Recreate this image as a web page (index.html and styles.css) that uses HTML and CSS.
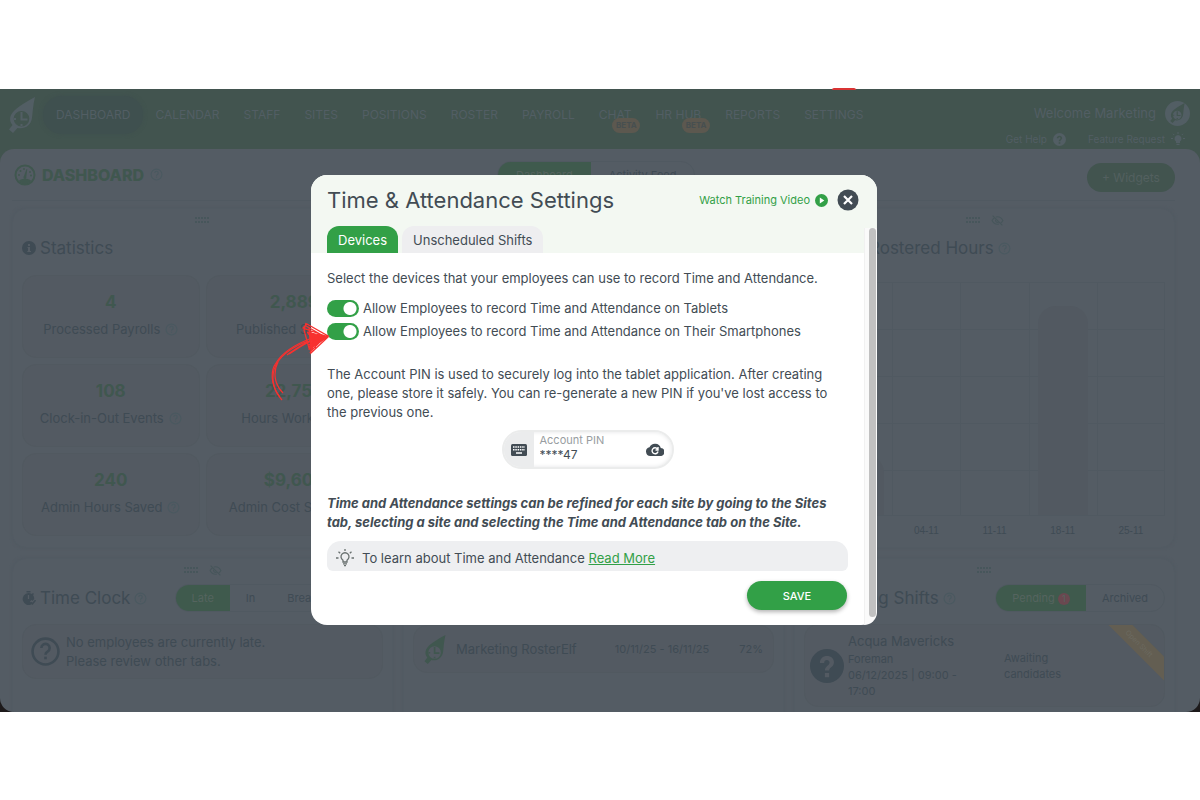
FILE: index.html
```html
<!DOCTYPE html>
<html lang="en">
<head>
  <meta charset="UTF-8" />
  <meta name="viewport" content="width=device-width, initial-scale=1.0" />
  <title>Time &amp; Attendance Settings</title>
  <link rel="stylesheet" href="styles.css">
</head>
<body>
  <!-- shared icons -->
  <svg class="sprite" aria-hidden="true">
    <symbol id="help" viewBox="0 0 24 24"><circle cx="12" cy="12" r="10" fill="none" stroke="currentColor" stroke-width="2"/><path d="M8.800 9.300a3.200 3.200 0 1 1 4.800 2.800c-1 .6-1.600 1.100-1.600 2.400" fill="none" stroke="currentColor" stroke-width="2"/><rect x="11" y="16" width="2" height="2" fill="currentColor"/></symbol>
    <symbol id="help-solid" viewBox="0 0 24 24"><path fill="currentColor" fill-rule="evenodd" d="M12 0a12 12 0 1 0 0 24 12 12 0 0 0 0-24zm-1.500 17h3v3h-3zm0-1.800c0-3.200 3.300-3.400 3.300-5.700 0-1-.8-1.700-1.900-1.700-1.200 0-1.900.8-1.900 2H7c0-3 2-4.900 5-4.900s4.900 1.800 4.900 4.400c0 3.400-3.400 3.600-3.400 5.900z"/></symbol>
    <symbol id="grip" viewBox="0 0 16 6"><g fill="currentColor"><rect width="2" height="2"/><rect x="3" width="2" height="2"/><rect x="6" width="2" height="2"/><rect x="9" width="2" height="2"/><rect x="12" width="2" height="2"/><rect y="4" width="2" height="2"/><rect x="3" y="4" width="2" height="2"/><rect x="6" y="4" width="2" height="2"/><rect x="9" y="4" width="2" height="2"/><rect x="12" y="4" width="2" height="2"/></g></symbol>
    <symbol id="eye-off" viewBox="0 0 24 24"><path fill="none" stroke="currentColor" stroke-width="2" d="M9 5.500c6-1.500 10.500 2 13 6.500-1 2-2.300 3.600-4 4.800M14.500 18.500C9 19.800 4.500 17 2 12c1-2 2.300-3.600 4-4.700M3 3l18 18M9.500 9.500a3.500 3.500 0 0 0 5 5"/></symbol>
    <symbol id="leaf" viewBox="0 0 26 36"><path fill="currentColor" fill-rule="evenodd" d="M26 0C15 6 5 12 2 18c-1.800 4.500-.6 7.500 1.500 10L0 32.500 4 36l4.500-5C16 32.500 22 28 23 21c.8-6 1-13 3-21zM12.500 14a7.800 7.800 0 1 0 0 15.600 7.800 7.800 0 0 0 0-15.600z"/><path d="M12.500 15v7.500h6M5 22h2M12.500 27v2" stroke="currentColor" stroke-width="2" fill="none"/></symbol>
  </svg>

  <div class="app">
    <header class="topbar">
      <svg class="logo"><use href="#leaf"/></svg>
      <nav class="nav">
        <a href="#" class="active">DASHBOARD</a>
        <a href="#">CALENDAR</a>
        <a href="#">STAFF</a>
        <a href="#">SITES</a>
        <a href="#">POSITIONS</a>
        <a href="#">ROSTER</a>
        <a href="#">PAYROLL</a>
        <a href="#">CHAT<span class="beta">BETA</span></a>
        <a href="#">HR HUB<span class="beta">BETA</span></a>
        <a href="#">REPORTS</a>
        <a href="#" class="marked">SETTINGS</a>
      </nav>
      <div class="account">
        <div class="welcome">Welcome Marketing
          <span class="avatar"><svg><use href="#leaf"/></svg></span>
        </div>
        <div class="links">
          <a href="#">Get Help <svg width="13" height="13"><use href="#help-solid"/></svg></a>
          <a href="#">Feature Request
            <svg width="14" height="14" viewBox="0 0 14 14"><path fill="currentColor" d="M7 3a3.600 3.600 0 0 0-2 6.500V11h4V9.500A3.600 3.600 0 0 0 7 3zM5.500 11.800h3V13h-3z"/><path stroke="currentColor" d="M7 0v2M0 6.500h2M12 6.500h2M2 1.800l1.200 1.200M12 1.800l-1.200 1.200"/></svg></a>
        </div>
      </div>
    </header>

    <main class="panel">
      <div class="page-head">
        <h1>
          <svg width="22" height="22" viewBox="0 0 22 22"><circle cx="11" cy="11" r="9.500" fill="none" stroke="currentColor" stroke-width="2"/><path fill="currentColor" d="M5 16.500c3-2.500 9-2.500 12 0-3 4.500-9 4.500-12 0zM10 12l2.500-7 .8.3-1 7.200a1.500 1.500 0 1 1-2.300-.5z"/><g fill="currentColor"><circle cx="5" cy="11" r="1"/><circle cx="6.500" cy="7" r="1"/><circle cx="10" cy="5" r="1"/><circle cx="16" cy="8" r="1"/><circle cx="17" cy="11.500" r="1"/></g></svg>
          DASHBOARD <svg class="q"><use href="#help"/></svg>
        </h1>
        <div class="tabs page-tabs"><button class="on">Dashboard</button><button>Activity Feed</button></div>
        <button class="add">+ Widgets</button>
      </div>

      <div class="widgets">
        <section class="widget">
          <div class="grip"><svg class="dots"><use href="#grip"/></svg></div>
          <h2><svg width="14" height="14" viewBox="0 0 14 14"><path fill="currentColor" fill-rule="evenodd" d="M7 0a7 7 0 1 0 0 14A7 7 0 0 0 7 0zM6 3h2v2H6zM5.500 6H8v4h1v1H5.300v-1H6V7h-.5z"/></svg>Statistics</h2>
          <div class="stats">
            <div class="stat"><b>4</b><span>Processed Payrolls <svg class="q"><use href="#help"/></svg></span></div>
            <div class="stat"><b>2,889</b><span>Published Shifts <svg class="q"><use href="#help"/></svg></span></div>
            <div class="stat"><b>108</b><span>Clock-in-Out Events <svg class="q"><use href="#help"/></svg></span></div>
            <div class="stat"><b>22,754</b><span>Hours Worked <svg class="q"><use href="#help"/></svg></span></div>
            <div class="stat"><b>240</b><span>Admin Hours Saved <svg class="q"><use href="#help"/></svg></span></div>
            <div class="stat"><b>$9,600</b><span>Admin Cost Saved <svg class="q"><use href="#help"/></svg></span></div>
          </div>
        </section>

        <section class="widget"></section>

        <section class="widget">
          <div class="grip"><svg class="dots"><use href="#grip"/></svg><svg class="eye"><use href="#eye-off"/></svg></div>
          <h2 class="hours">Rostered Hours<svg class="q"><use href="#help"/></svg></h2>
          <div class="chart">
            <div class="col"><div class="plot"><i style="height:26%"></i></div><span></span></div>
            <div class="col"><div class="plot"></div><span>04-11</span></div>
            <div class="col"><div class="plot"></div><span>11-11</span></div>
            <div class="col"><div class="plot"><i style="height:90%"></i></div><span>18-11</span></div>
            <div class="col"><div class="plot"></div><span>25-11</span></div>
          </div>
        </section>

        <section class="widget">
          <div class="grip"><svg class="dots"><use href="#grip"/></svg><svg class="eye"><use href="#eye-off"/></svg></div>
          <div class="widget-head">
            <h2><svg width="14" height="14" viewBox="0 0 14 14"><path fill="currentColor" d="M4.500 0h4v1.500h-4zM6.500 2a6 6 0 1 0 3.500 11L8 10.500 9.500 9l1 1 1.700-2A6 6 0 0 0 11 4l1-1-1-1-1.200 1A6 6 0 0 0 6.500 2z"/><path d="M6.500 4v4" stroke="#545c64" stroke-width="1.300"/><path d="M9 11.200l1.500 1.600 3-3.600" fill="none" stroke="currentColor" stroke-width="1.500"/></svg>Time Clock<svg class="q"><use href="#help"/></svg></h2>
            <div class="tabs clock-tabs"><button class="on">Late</button><button>In</button><button>Breaks</button></div>
          </div>
          <div class="row late"><svg width="31" height="31"><use href="#help"/></svg><p>No employees are currently late.<br>Please review other tabs.</p></div>
        </section>

        <section class="widget">
          <div class="spacer"></div>
          <div class="row site"><svg class="leaf"><use href="#leaf"/></svg><p>Marketing RosterElf</p><small>10/11/25 - 16/11/25</small><small>72%</small></div>
        </section>

        <section class="widget">
          <div class="grip"><svg class="dots"><use href="#grip"/></svg></div>
          <div class="widget-head">
            <h2 class="shifts">Pending Shifts<svg class="q"><use href="#help"/></svg></h2>
            <div class="tabs"><button class="on">Pending <em>1</em></button><button>Archived</button></div>
          </div>
          <div class="row shift">
            <svg width="34" height="34"><use href="#help-solid"/></svg>
            <div class="who"><p>Acqua Mavericks</p><small>Foreman<br>06/12/2025 | 09:00 - 17:00</small></div>
            <small class="state">Awaiting candidates</small>
            <span class="ribbon">Open Shift</span>
          </div>
        </section>
      </div>
    </main>
  </div>

  <div class="overlay">
    <div class="modal" role="dialog" aria-labelledby="modal-title">
      <div class="modal-head">
        <div class="title-row">
          <h2 id="modal-title">Time &amp; Attendance Settings</h2>
          <a href="#" class="video">Watch Training Video
            <svg width="13" height="13" viewBox="0 0 14 14"><circle cx="7" cy="7" r="7" fill="#32a047"/><path d="M5.200 3.800v6.400L10 7z" fill="#fff"/></svg></a>
          <button class="close" aria-label="Close"><svg width="22" height="22" viewBox="0 0 22 22"><circle cx="11" cy="11" r="10.500" fill="#424c54"/><path d="M7 7l8 8M15 7l-8 8" stroke="#fff" stroke-width="2.200"/></svg></button>
        </div>
        <div class="modal-tabs"><button class="on">Devices</button><button>Unscheduled Shifts</button></div>
      </div>

      <div class="modal-body">
        <p class="intro">Select the devices that your employees can use to record Time and Attendance.</p>
        <label class="toggle"><input type="checkbox" checked>Allow Employees to record Time and Attendance on Tablets</label>
        <label class="toggle"><input type="checkbox" checked>Allow Employees to record Time and Attendance on Their Smartphones
          <svg class="arrow" width="62" height="80" viewBox="0 0 62 80" fill="none" stroke="#f8312f"><path stroke-width="1.200" d="M10 75C1 64 0 49 6 41c6-10 20-19 36-25M13 71C4 62 3 50 8 40"/><path stroke-width="1.200" d="M12 78C1 66 1 51 7 41c7-11 18-17 31-22M19 32c8-5 16-11 25-14M17 33c9-7 17-11 24-15"/><path fill="#f8312f" stroke-width="1" d="M37 10l21 5-17 11 1-9z"/><path stroke-width="1.300" d="M33 6l25 9-17 16 0-22-8-3 4-4 21 12-20 9M36 1l-2 7 5 18 18-11M39 5l2 24 14-14-19-11M39 28l4-17 2 15 4-14-9 19"/></svg>
        </label>
        <p class="pin-text">The Account PIN is used to securely log into the tablet application. After creating one, please store it safely. You can re-generate a new PIN if you've lost access to the previous one.</p>
        <div class="pin">
          <span class="pin-icon"><svg width="16" height="12" viewBox="0 0 16 12"><rect width="16" height="12" rx="1.500" fill="#424c54"/><path d="M2 3h12M2 5.800h12" stroke="#fff" stroke-width="1.500" stroke-dasharray="1.500 .8"/><path d="M5 9h6" stroke="#fff" stroke-width="1.400"/></svg></span>
          <span class="pin-field"><label for="pin">Account PIN</label><input id="pin" type="text" value="****47"></span>
          <button aria-label="Re-generate PIN"><svg width="18" height="13" viewBox="0 0 18 13"><path fill="#424c54" d="M4.500 13a4.400 4.400 0 0 1-1-8.700A6 6 0 0 1 14.800 5 4 4 0 0 1 14 13z"/><path d="M11.500 6A3 3 0 1 0 12 8.500M12 4v3H9.500" fill="none" stroke="#fff" stroke-width="1.400"/></svg></button>
        </div>
        <p class="note">Time and Attendance settings can be refined for each site by going to the Sites tab, selecting a site and selecting the Time and Attendance tab on the Site.</p>
        <div class="learn">
          <svg width="18" height="18" viewBox="0 0 18 18" fill="none" stroke="#68706f" stroke-width="1.300"><path d="M7 13v-1.800a4 4 0 1 1 4 0V13zM7 14.800h4M8 16.700h2M9 0v2M0 9h2.500M15.500 9H18M2.500 2.800l1.700 1.500M15.500 2.800l-1.700 1.500"/></svg>
          <span>To learn about Time and Attendance <a href="#">Read More</a></span>
        </div>
      </div>
      <div class="modal-foot"><button class="save">SAVE</button></div>
      <div class="scrollbar"><div class="thumb"></div></div>
    </div>
  </div>
</body>
</html>
```
FILE: styles.css
```css
:root {
  --green: #32a047;
  --dark: #424c54;
  --dim: #545c64;
  --dim-line: #505961;
  --dim-text: #3f4b54;
  --dim-green: #40574f;
  --bar: #42544f;
}
* {
  box-sizing: border-box;
}
body {
  margin: 0;
  font-family: Inter, "Liberation Sans", sans-serif;
  font-size: 13px;
  color: var(--dark);
  background: #fff;
}
h1, h2, p {
  margin: 0;
  font-weight: 400;
}
button {
  font-family: inherit;
  border: none;
  background: none;
  padding: 0;
  color: inherit;
  cursor: pointer;
}
a {
  color: inherit;
  text-decoration: none;
}
svg {
  flex: none;
}
.sprite {
  position: absolute;
  width: 0;
  height: 0;
}

/* app behind the dialog */
.app {
  height: calc(100vh - 177px);
  margin: 89px 0 88px;
  background: linear-gradient(var(--bar) 90%, #1d1a1b 90%);
  display: flex;
  flex-direction: column;
}
.topbar {
  height: 60px;
  flex: none;
  display: flex;
  padding: 0 10px 0 9px;
  color: #525e64;
  background: var(--bar);
}
.logo {
  width: 26px;
  height: 36px;
  margin-top: 8px;
}
.nav {
  display: flex;
  gap: 24px;
  margin-left: 8px;
  padding-top: 7px;
}
.nav a {
  position: relative;
  height: 38px;
  line-height: 38px;
  font-size: 12px;
}
.nav .active {
  padding: 0 13px;
  margin-right: -12px;
  border-radius: 20px;
  background: #3f504f;
  box-shadow: 0 0 4px #3f504f;
}
.nav .marked::before {
  content: "";
  position: absolute;
  left: 28px;
  top: -8px;
  width: 24px;
  height: 2px;
  border-radius: 12px 12px 0 0;
  background: #d93434;
}
.beta {
  position: absolute;
  right: -9px;
  top: 22px;
  width: 28px;
  height: 15px;
  line-height: 15px;
  border-radius: 8px;
  text-align: center;
  font-size: 8px;
  font-weight: 700;
  color: #474f50;
  background: #5c584f;
}
.account {
  margin-left: auto;
  padding-top: 11px;
}
.welcome {
  display: flex;
  align-items: center;
  justify-content: flex-end;
  gap: 9px;
  height: 26px;
}
.avatar {
  width: 25px;
  height: 25px;
  border-radius: 50%;
  background: #525e64;
  color: var(--bar);
  display: grid;
  place-items: center;
}
.avatar svg {
  width: 15px;
  height: 20px;
}
.links {
  display: flex;
  justify-content: flex-end;
  gap: 22px;
  padding: 6px 5px 0 0;
  font-size: 10px;
}
.links a {
  display: flex;
  align-items: center;
  gap: 6px;
}
.panel {
  flex: 1;
  min-height: 0;
  overflow: hidden;
  border-radius: 14px;
  padding: 0 25px 0 12px;
  background: var(--dim);
  color: var(--dim-text);
}
.page-head {
  position: relative;
  display: flex;
  align-items: center;
  justify-content: space-between;
  height: 52px;
  border-bottom: 1px solid var(--dim-line);
}
.page-head h1 {
  display: flex;
  align-items: center;
  gap: 6px;
  padding-left: 2px;
  font-size: 16px;
  font-weight: 800;
  color: var(--dim-green);
}
.q {
  width: 13px;
  height: 13px;
  color: #4a5960;
}
.tabs {
  display: flex;
  height: 28px;
  border: 1px solid var(--dim-line);
  border-radius: 14px;
  overflow: hidden;
  font-size: 11px;
}
.tabs button {
  font-size: 11px;
  padding: 0 16px;
}
.tabs .on {
  color: #55645f;
  background: #3f5a4d;
}
.page-tabs {
  position: absolute;
  left: 485px;
}
.page-tabs button {
  padding: 0 18px;
}
.clock-tabs {
  margin-right: 43px;
}
.tabs em {
  display: inline-block;
  width: 12px;
  line-height: 12px;
  border-radius: 50%;
  font-size: 9px;
  font-style: normal;
  background: #6a4850;
}
.add {
  width: 88px;
  height: 29px;
  margin-top: 5px;
  border-radius: 15px;
  font-size: 12px;
  color: #53605f;
  background: var(--bar);
}
.widgets {
  display: grid;
  grid-template-columns: repeat(3, 1fr);
  grid-template-rows: 340px 200px;
  gap: 10px;
  padding-top: 7px;
}
.widget {
  min-width: 0;
  padding: 0 9px;
  border: 1px solid #525b63;
  border-radius: 14px;
  box-shadow: 0 0 3px var(--dim-line);
}
.grip {
  display: flex;
  align-items: center;
  justify-content: center;
  gap: 9px;
  height: 22px;
  color: #47565b;
}
.dots {
  width: 16px;
  height: 6px;
}
.eye {
  width: 13px;
  height: 13px;
}
.widget h2 {
  display: flex;
  align-items: center;
  gap: 4px;
  height: 34px;
  font-size: 17px;
}
.widget .hours {
  padding-left: 65px;
}
.widget-head {
  display: flex;
  align-items: center;
  justify-content: space-between;
  height: 34px;
}
.widget .shifts {
  padding-left: 19px;
}
.stats {
  display: grid;
  grid-template-columns: 1fr 1fr;
  gap: 6px;
  padding-top: 10px;
}
.stat {
  height: 83px;
  padding-top: 14px;
  border: 1px solid #515960;
  border-radius: 14px;
  background: #535a62;
  text-align: center;
  line-height: 24px;
}
.stat b {
  display: block;
  font-size: 17px;
  color: var(--dim-green);
}
.stat span {
  display: flex;
  align-items: center;
  justify-content: center;
  gap: 5px;
  padding-top: 3px;
}
.chart {
  display: flex;
  padding: 17px 0 0 20px;
}
.col {
  flex: 1;
  text-align: center;
  font: 10px/30px "Liberation Sans", sans-serif;
}
.plot {
  display: flex;
  align-items: flex-end;
  justify-content: center;
  height: 234px;
  border: 1px solid var(--dim-line);
  border-right: none;
  background: repeating-linear-gradient(transparent 0 46px, var(--dim-line) 46px 47px);
}
.col:last-child .plot {
  border-right: 1px solid var(--dim-line);
}
.plot i {
  width: 50px;
  border-radius: 18px 18px 0 0;
  background: #525961;
}
.row {
  display: flex;
  align-items: center;
  margin-top: 9px;
  border: 1px solid #515960;
  border-radius: 14px;
  background: #535a62;
  line-height: 19px;
}
.late {
  height: 55px;
  gap: 5px;
  padding-left: 7px;
}
.spacer {
  height: 57px;
}
.site {
  height: 48px;
  padding: 0 10px;
}
.site p {
  flex: 1;
  padding-left: 10px;
}
.site small {
  padding-left: 30px;
  font-size: 11px;
}
.leaf {
  width: 22px;
  height: 29px;
  color: var(--dim-green);
}
.shift {
  position: relative;
  overflow: hidden;
  height: 83px;
  gap: 4px;
  padding-left: 5px;
}
.shift small {
  display: block;
  font-size: 11px;
  line-height: 16px;
}
.who {
  width: 110px;
}
.state {
  width: 80px;
  margin-left: 42px;
}
.ribbon {
  position: absolute;
  top: 10px;
  right: -30px;
  width: 110px;
  line-height: 17px;
  text-align: center;
  font-size: 7px;
  color: #6c6a60;
  background: #635e52;
  transform: rotate(45deg);
}

/* dialog */
.overlay {
  position: fixed;
  inset: 0;
  display: flex;
  align-items: center;
  justify-content: center;
  padding-right: 12px;
}
.modal {
  position: relative;
  width: 566px;
  max-width: 96%;
  border-radius: 16px;
  background: #fff;
}
.modal-head {
  padding: 11px 18px 0 16px;
  border-radius: 16px 16px 0 0;
  background: #f3f8f2;
}
.title-row {
  display: flex;
  align-items: center;
  height: 28px;
}
.title-row h2 {
  flex: 1;
  font-size: 22px;
}
.video {
  display: flex;
  align-items: center;
  gap: 5px;
  font-size: 11px;
  color: var(--green);
}
.close {
  height: 22px;
  margin-left: 9px;
}
.modal-tabs {
  display: flex;
  gap: 4px;
  padding-top: 12px;
}
.modal-tabs button {
  height: 27px;
  padding: 0 11px;
  border-radius: 12px 12px 0 0;
  font-size: 13px;
  background: #eeeef0;
}
.modal-tabs .on {
  color: #fff;
  background: var(--green);
}
.modal-body {
  padding: 16px 29px 0 16px;
  line-height: 19px;
}
.intro {
  padding-bottom: 9px;
}
.toggle {
  position: relative;
  display: flex;
  align-items: center;
  gap: 4px;
  height: 23px;
  white-space: nowrap;
}
.toggle input {
  appearance: none;
  width: 32px;
  height: 17px;
  margin: 0;
  border-radius: 9px;
  background: radial-gradient(circle at 23px 50%, #fff 6px, var(--green) 7px);
}
.arrow {
  position: absolute;
  left: -57px;
  top: 2px;
}
.pin-text {
  padding: 22px 0 8px;
}
.pin {
  display: flex;
  align-items: center;
  width: 172px;
  height: 39px;
  margin: 0 auto;
  border: 2px solid #ebecec;
  border-radius: 20px;
  overflow: hidden;
  box-shadow: inset 0 0 4px #e3e4e5;
}
.pin-icon {
  display: grid;
  place-items: center;
  width: 30px;
  height: 100%;
  background: #ebeced;
}
.pin-field {
  flex: 1;
  min-width: 0;
  padding: 0 0 5px 6px;
  line-height: 14px;
}
.pin-field label {
  display: block;
  font-size: 11px;
  color: #989da1;
}
.pin-field input {
  display: block;
  width: 100%;
  height: 14px;
  padding: 0;
  border: none;
  outline: none;
  font-family: inherit;
  font-size: 12px;
  color: inherit;
  background: none;
}
.pin button {
  height: 13px;
  margin-right: 8px;
}
.note {
  padding-top: 25px;
  font-weight: 700;
  font-style: italic;
}
.learn {
  display: flex;
  align-items: center;
  gap: 8px;
  height: 30px;
  margin-top: 9px;
  padding: 4px 9px 0;
  border-radius: 14px 14px 6px 6px;
  background: #eeeff1;
}
.learn a {
  color: var(--green);
  text-decoration: underline;
}
.modal-foot {
  display: flex;
  justify-content: flex-end;
  padding: 10px 30px 15px;
}
.save {
  width: 100px;
  height: 29px;
  border-radius: 15px;
  font-size: 11px;
  font-weight: 500;
  color: #fff;
  background: var(--green);
  box-shadow: 0 2px 4px rgba(0, 0, 0, 0.3);
}
.scrollbar {
  position: absolute;
  top: 53px;
  right: 0;
  bottom: 0;
  width: 13px;
  padding: 0 2px 8px 4px;
  border-radius: 0 0 16px;
  border-left: 1px solid #f1f1f1;
  background: #fafafa;
}
.thumb {
  width: 7px;
  height: 100%;
  border-radius: 4px;
  background: #c1c1c1;
}
```
